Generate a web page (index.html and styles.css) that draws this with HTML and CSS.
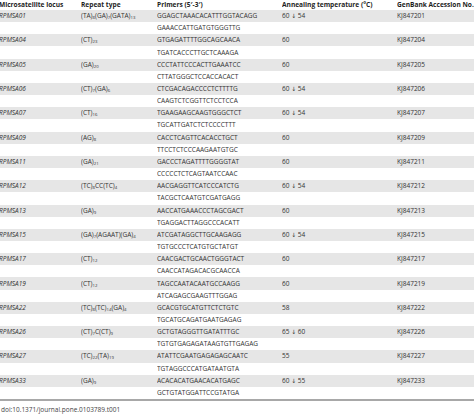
FILE: index.html
```html
<!DOCTYPE html>
<html>
<head>
<meta charset="utf-8">
<link rel="stylesheet" href="styles.css">
</head>
<body>
<div class="frame">
<table class="tbl">
<colgroup>
<col class="c1"><col class="c2"><col class="c3"><col class="c4"><col class="c5">
</colgroup>
<thead>
<tr class="head"><th>Microsatellite locus</th><th>Repeat type</th><th>Primers (5′-3′)</th><th>Annealing temperature (°C)</th><th>GenBank Accession No.</th></tr>
</thead>
<tbody>
<tr class="odd"><td class="loc">RPMSA01</td><td>(TA)<sub>8</sub>(GA)<sub>7</sub>(GATA)<sub>13</sub></td><td>GGAGCTAAACACATTTGGTACAGG</td><td>60 <span class="arr">↓</span> 54</td><td>KJ847201</td></tr>
<tr class="even"><td></td><td></td><td>GAAACCATTGATGTGGGTTG</td><td></td><td></td></tr>
<tr class="odd"><td class="loc">RPMSA04</td><td>(CT)<sub>23</sub></td><td>GTGAGATTTTGGCAGCAACA</td><td>60</td><td>KJ847204</td></tr>
<tr class="even"><td></td><td></td><td>TGATCACCCTTGCTCAAAGA</td><td></td><td></td></tr>
<tr class="odd"><td class="loc">RPMSA05</td><td>(GA)<sub>20</sub></td><td>CCCTATTCCCACTTGAAATCC</td><td>60</td><td>KJ847205</td></tr>
<tr class="even"><td></td><td></td><td>CTTATGGGCTCCACCACACT</td><td></td><td></td></tr>
<tr class="odd"><td class="loc">RPMSA06</td><td>(CT)<sub>7</sub>(GA)<sub>6</sub></td><td>CTCGACAGACCCCTCTTTTG</td><td>60 <span class="arr">↓</span> 54</td><td>KJ847206</td></tr>
<tr class="even"><td></td><td></td><td>CAAGTCTCGGTTCTCCTCCA</td><td></td><td></td></tr>
<tr class="odd"><td class="loc">RPMSA07</td><td>(CT)<sub>16</sub></td><td>TGAAGAAGCAAGTGGGCTCT</td><td>60 <span class="arr">↓</span> 54</td><td>KJ847207</td></tr>
<tr class="even"><td></td><td></td><td>TGCATTGATCTCTCCCCTTT</td><td></td><td></td></tr>
<tr class="odd"><td class="loc">RPMSA09</td><td>(AG)<sub>8</sub></td><td>CACCTCAGTTCACACCTGCT</td><td>60</td><td>KJ847209</td></tr>
<tr class="even"><td></td><td></td><td>TTCCTCTCCCAAGAATGTGC</td><td></td><td></td></tr>
<tr class="odd"><td class="loc">RPMSA11</td><td>(GA)<sub>21</sub></td><td>GACCCTAGATTTTGGGGTAT</td><td>60</td><td>KJ847211</td></tr>
<tr class="even"><td></td><td></td><td>CCCCCTCTCAGTAATCCAAC</td><td></td><td></td></tr>
<tr class="odd"><td class="loc">RPMSA12</td><td>(TC)<sub>8</sub>CC(TC)<sub>4</sub></td><td>AACGAGGTTCATCCCATCTG</td><td>60 <span class="arr">↓</span> 54</td><td>KJ847212</td></tr>
<tr class="even"><td></td><td></td><td>TACGCTCAATGTCGATGAGG</td><td></td><td></td></tr>
<tr class="odd"><td class="loc">RPMSA13</td><td>(GA)<sub>9</sub></td><td>AACCATGAAACCCTAGCGACT</td><td>60</td><td>KJ847213</td></tr>
<tr class="even"><td></td><td></td><td>TGAGGACTTAGGCCCACATT</td><td></td><td></td></tr>
<tr class="odd"><td class="loc">RPMSA15</td><td>(GA)<sub>7</sub>(AGAAT)(GA)<sub>4</sub></td><td>ATCGATAGGCTTGCAAGAGG</td><td>60 <span class="arr">↓</span> 54</td><td>KJ847215</td></tr>
<tr class="even"><td></td><td></td><td>TGTGCCCTCATGTGCTATGT</td><td></td><td></td></tr>
<tr class="odd"><td class="loc">RPMSA17</td><td>(CT)<sub>12</sub></td><td>CAACGACTGCAACTGGGTACT</td><td>60</td><td>KJ847217</td></tr>
<tr class="even"><td></td><td></td><td>CAACCATAGACACGCAACCA</td><td></td><td></td></tr>
<tr class="odd"><td class="loc">RPMSA19</td><td>(CT)<sub>12</sub></td><td>TAGCCAATACAATGCCAAGG</td><td>60</td><td>KJ847219</td></tr>
<tr class="even"><td></td><td></td><td>ATCAGAGCGAAGTTTGGAG</td><td></td><td></td></tr>
<tr class="odd"><td class="loc">RPMSA22</td><td>(TC)<sub>8</sub>(TC)<sub>14</sub>(GA)<sub>4</sub></td><td>GCACGTGCATGTTCTCTGTC</td><td>58</td><td>KJ847222</td></tr>
<tr class="even"><td></td><td></td><td>TGCATGCAGATGAATGAGAG</td><td></td><td></td></tr>
<tr class="odd"><td class="loc">RPMSA26</td><td>(CT)<sub>7</sub>C(CT)<sub>9</sub></td><td>GCTGTAGGGTTGATATTTGC</td><td>65 <span class="arr">↓</span> 60</td><td>KJ847226</td></tr>
<tr class="even"><td></td><td></td><td>TGTGTGAGAGATAAGTGTTGAGAG</td><td></td><td></td></tr>
<tr class="odd"><td class="loc">RPMSA27</td><td>(TC)<sub>22</sub>(TA)<sub>19</sub></td><td>ATATTCGAATGAGAGAGCAATC</td><td>55</td><td>KJ847227</td></tr>
<tr class="even"><td></td><td></td><td>TGTAGGCCCATGATAATGTA</td><td></td><td></td></tr>
<tr class="odd"><td class="loc">RPMSA33</td><td>(GA)<sub>9</sub></td><td>ACACACATGAACACATGAGC</td><td>60 <span class="arr">↓</span> 55</td><td>KJ847233</td></tr>
<tr class="even last"><td></td><td></td><td>GCTGTATGGATTCCGTATGA</td><td></td><td></td></tr>
</tbody>
</table>
<p class="doi">doi:10.1371/journal.pone.0103789.t001</p>
</div>
</body>
</html>
```
FILE: styles.css
```css
html, body {
  margin: 0;
  padding: 0;
  background: #ffffff;
}
body {
  width: 474px;
  height: 414px;
  overflow: hidden;
  font-family: "Open Sans", "DejaVu Sans", sans-serif;
  color: #333333;
}
.frame {
  width: 474px;
  overflow: hidden;
}
.tbl {
  margin-left: -1px;
  width: 490px;
  table-layout: fixed;
  border-collapse: collapse;
  border-spacing: 0;
  font-size: 6.5px;
}
.c1 { width: 82px; }
.c2 { width: 76px; }
.c3 { width: 125px; }
.c4 { width: 115px; }
.c5 { width: 92px; }
.tbl th, .tbl td {
  padding: 0;
  text-align: left;
  white-space: nowrap;
  overflow: hidden;
  vertical-align: middle;
  line-height: 8px;
}
.head th {
  height: 10px;
  vertical-align: top;
  font-weight: 700;
  font-size: 6.6px;
  color: #1e1e1e;
  padding-top: 1px;
  box-sizing: border-box;
  line-height: 7px;
}
.tbl td {
  height: 12.17px;
}
.tbl td.loc {
  font-style: italic;
}
.odd td {
  background: #e6e6e6;
}
.even td {
  background: #ffffff;
}
.last td {
  border-bottom: 2px solid #a8a8a8;
}
.tbl sub {
  font-size: 4.3px;
  vertical-align: -1px;
  line-height: 0;
}
.arr {
  font-family: "DejaVu Sans", sans-serif;
  font-size: 6px;
}
.doi {
  margin: 5px 0 0 1px;
  font-size: 6.5px;
  line-height: 8px;
  color: #444444;
}
```
